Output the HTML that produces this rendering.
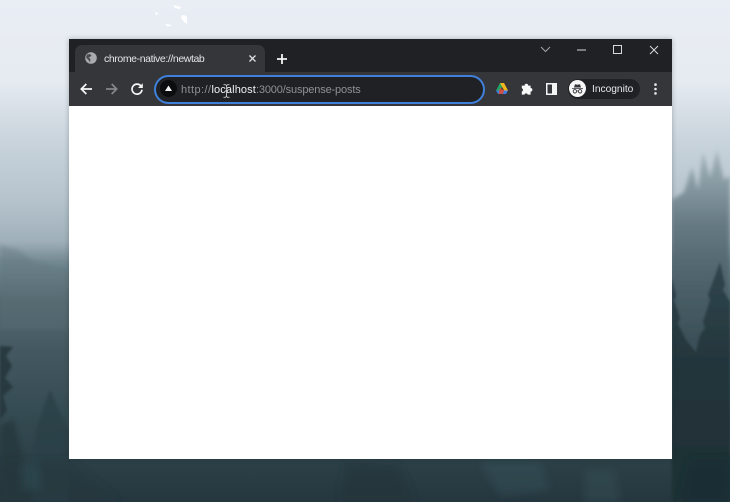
<!DOCTYPE html>
<html lang="en">
<head>
<meta charset="utf-8">
<title>Chrome incognito window</title>
<style>
html,body{margin:0;padding:0;width:730px;height:502px;overflow:hidden;background:#e9edf4}
body{position:relative;font-family:"Liberation Sans",sans-serif}
#bg{position:absolute;left:0;top:0}
#win{position:absolute;left:69px;top:39px;width:603px;height:420px;background:#202124;box-shadow:0 0 5px rgba(30,40,50,.3)}
#tab{position:absolute;left:6px;top:6px;width:190px;height:27px;background:#35363a;border-radius:7px 7px 0 0}
#tabt{position:absolute;left:35px;top:13px;font-size:10.5px;letter-spacing:-.4px;line-height:14px;color:#e4e5e7;white-space:nowrap}
#bar{position:absolute;left:0;top:33px;width:603px;height:34px;background:#35363a}
#page{position:absolute;left:0;top:67px;width:603px;height:353px;background:#fff}
#omni{position:absolute;left:85px;top:36px;width:327px;height:25px;border:2px solid #3f80da;border-radius:15px;background:#202124}
#url{position:absolute;left:112px;top:44px;font-size:11px;line-height:14px;color:#8f9194;white-space:nowrap}
#url i{font-style:normal;letter-spacing:.42px}
#url b{font-weight:normal;color:#f1f2f3;letter-spacing:.12px}
#url span{letter-spacing:-.15px}
#pill{position:absolute;left:499px;top:40px;width:72px;height:20px;border-radius:10px;background:#202124}
#inc{position:absolute;left:523px;top:44px;font-size:10.2px;line-height:14px;color:#e8e9ea;white-space:nowrap}
svg.i{position:absolute;overflow:visible}
</style>
</head>
<body>
<svg id="bg" width="730" height="502" viewBox="0 0 730 502">
<defs>
<linearGradient id="sky" x1="0" y1="0" x2="0" y2="502" gradientUnits="userSpaceOnUse">
<stop offset="0" stop-color="#e9edf4"/>
<stop offset=".16" stop-color="#e6ebf1"/>
<stop offset=".28" stop-color="#c9d4dc"/>
<stop offset=".4" stop-color="#b5c3cc"/>
<stop offset=".48" stop-color="#a0b0ba"/>
<stop offset=".52" stop-color="#748a93"/>
<stop offset=".6" stop-color="#54696f"/>
<stop offset=".7" stop-color="#435860"/>
<stop offset=".84" stop-color="#334950"/>
<stop offset="1" stop-color="#25373e"/>
</linearGradient>
<linearGradient id="fade" x1="0" y1="150" x2="0" y2="340" gradientUnits="userSpaceOnUse">
<stop offset="0" stop-color="#7e939b" stop-opacity=".5"/>
<stop offset=".4" stop-color="#5d727a" stop-opacity=".9"/>
<stop offset="1" stop-color="#3b5058"/>
</linearGradient>
<linearGradient id="near" x1="0" y1="262" x2="0" y2="460" gradientUnits="userSpaceOnUse">
<stop offset="0" stop-color="#31464e"/>
<stop offset=".5" stop-color="#24363c"/>
<stop offset="1" stop-color="#1f3036"/>
</linearGradient>
<filter id="b3" x="-20%" y="-20%" width="140%" height="140%"><feGaussianBlur stdDeviation="2"/></filter>
<filter id="b1" x="-20%" y="-20%" width="140%" height="140%"><feGaussianBlur stdDeviation="1"/></filter>
<filter id="b5" x="-20%" y="-20%" width="140%" height="140%"><feGaussianBlur stdDeviation="4"/></filter>
</defs>
<rect width="730" height="502" fill="url(#sky)"/>
<!-- right distant conifers -->
<path filter="url(#b3)" d="M672 200L684 192L692 167L698 190L703 152L710 178L717 150L724 180L730 176V360H672Z" fill="url(#fade)"/>
<!-- right near conifers -->
<path filter="url(#b1)" d="M672 278L676 296L674 300L680 318L678 324L686 340L696 352L700 335L705 328L703 322L710 300L708 295L720 262L725 285L723 290L730 302V502H672Z" fill="url(#near)"/>
<!-- left haze -->
<path filter="url(#b3)" d="M0 245L18 250L35 262L69 268V330H0Z" fill="#5b7179" opacity=".35"/>
<!-- left branches and trees -->
<path filter="url(#b1)" d="M0 346L13 347L6 356L12 366L5 378L13 387L3 396L7 410L0 420Z" fill="#25373d" opacity=".9"/>
<path filter="url(#b1)" d="M50 390L58 408L66 425L69 430V502H30L36 430L42 412Z" fill="#2c4047" opacity=".75"/>
<path filter="url(#b3)" d="M0 425L14 420L24 462L30 502H0Z" fill="#26383e" opacity=".8"/>
<!-- bottom texture -->
<g filter="url(#b5)">
<path d="M0 462L70 460L120 502H0Z" fill="#20333a" opacity=".45"/>
<path d="M20 465L38 462L42 490L22 490Z" fill="#3a5860" opacity=".35"/>
<path d="M345 462L400 465L415 502H340Z" fill="#1e3036" opacity=".5"/>
<path d="M480 462L540 462L550 490L500 495Z" fill="#3a565d" opacity=".4"/>
<path d="M585 470L615 470L620 502H585Z" fill="#395359" opacity=".4"/>
<path d="M690 460L730 460V502H680Z" fill="#1c2d33" opacity=".8"/>
</g>
<path d="M173 5L181 7L180 9L175 8ZM156 12L158 13L157 15L155 14ZM182 15L187 16L187 24L184 22L181 18ZM166 24L172 25L170 26L166 26Z" fill="#fff"/>
</svg>

<div id="win">
<div id="tab"></div>
<div id="bar"></div>
<div id="page"></div>
<div id="omni"></div>
<div id="tabt">chrome-native://newtab</div>
<div id="url"><i>http://</i><b>localhost</b><span>:3000/suspense-posts</span></div>
<div id="pill"></div>
<div id="inc">Incognito</div>
</div>

<!-- favicon globe -->
<svg class="i" style="left:85px;top:52px" width="12" height="12" viewBox="0 0 12 12"><circle cx="6" cy="6" r="5.8" fill="#a9abae"/><path d="M2 2.5L5 2L6.5 3.5L5 5L3.5 5.5L5.5 7L5 10.5L3.5 8L1 5.5Z" fill="#4a4b4f"/></svg>
<!-- tab close -->
<svg class="i" style="left:248px;top:54px" width="9" height="9" viewBox="0 0 9 9"><path d="M1.5 1.5L7.5 7.5M7.5 1.5L1.5 7.5" stroke="#e4e5e7" stroke-width="1.3" fill="none"/></svg>
<!-- new tab -->
<svg class="i" style="left:276px;top:53px" width="12" height="12" viewBox="0 0 12 12"><path d="M6 1V11M1 6H11" stroke="#f4f4f5" stroke-width="1.8" fill="none"/></svg>
<!-- window controls -->
<svg class="i" style="left:540px;top:46px" width="11" height="8" viewBox="0 0 11 8"><path d="M1 1L5.5 5.5L10 1" stroke="#a3a4a7" stroke-width="1" fill="none"/></svg>
<svg class="i" style="left:577px;top:49px" width="9" height="2" viewBox="0 0 9 2"><path d="M0 1H9" stroke="#d8d9da" stroke-width="1" fill="none"/></svg>
<svg class="i" style="left:613px;top:45px" width="9" height="9" viewBox="0 0 9 9"><rect x=".5" y=".5" width="8" height="8" stroke="#d8d9da" stroke-width="1" fill="none"/></svg>
<svg class="i" style="left:649px;top:45px" width="10" height="10" viewBox="0 0 10 10"><path d="M1 1L9 9M9 1L1 9" stroke="#d8d9da" stroke-width="1" fill="none"/></svg>
<!-- back -->
<svg class="i" style="left:80px;top:83px" width="12" height="12" viewBox="0 0 12 12"><path d="M12 6H1.5M6.3 1L1.3 6L6.3 11" stroke="#f6f6f7" stroke-width="1.7" fill="none"/></svg>
<!-- forward -->
<svg class="i" style="left:106px;top:83px" width="12" height="12" viewBox="0 0 12 12"><path d="M0 6H10.5M5.7 1L10.7 6L5.7 11" stroke="#85878a" stroke-width="1.7" fill="none"/></svg>
<!-- reload -->
<svg class="i" style="left:131px;top:83px" width="12" height="12" viewBox="0 0 12 12"><path d="M10.1 3.2A5 5 0 1 0 11 6.8" stroke="#f6f6f7" stroke-width="1.7" fill="none"/><path d="M11.8 .2V5H7Z" fill="#f6f6f7"/></svg>
<!-- site info -->
<svg class="i" style="left:160px;top:80px" width="17" height="17" viewBox="0 0 17 17"><circle cx="8.5" cy="8.5" r="8.5" fill="#0c0d0e"/><path d="M8.5 5.5L12 11H5Z" fill="#f4f4f5"/></svg>
<!-- text cursor -->
<svg class="i" style="left:223px;top:84px" width="7" height="14" viewBox="0 0 7 14"><path d="M.5 .7H2.5L3.5 1.7L4.5 .7H6.5M3.5 1.7V12.3M.5 13.3H2.5L3.5 12.3L4.5 13.3H6.5M2 7H5" stroke="#c9cacc" stroke-width=".9" fill="none"/></svg>
<!-- drive -->
<svg class="i" style="left:496px;top:83px" width="12" height="11" viewBox="0 0 12 11"><path d="M4 0H8L5.5 5L3.8 7.8H0L2 3.8Z" fill="#1fa463"/><path d="M4 0H8L12 7.5H8.1Z" fill="#f2b61c"/><path d="M0 7.5H12L10 11H2Z" fill="#3f7ee8"/><path d="M4 4.8L8 7.5L7 11H2.6Z" fill="#dd4b39" opacity=".9"/></svg>
<!-- puzzle -->
<svg class="i" style="left:521px;top:83px" width="12" height="12" viewBox="0 0 12 12"><path d="M.8 2.6H3.6A1.8 1.8 0 0 1 7.2 2.6H9.6V5A1.8 1.8 0 0 1 9.6 8.6V11.6H6.8A1.8 1.8 0 0 0 3.4 11.6H.8V8.6A1.8 1.8 0 0 0 .8 5.2Z" fill="#f8f8f9"/></svg>
<!-- side panel -->
<svg class="i" style="left:546px;top:83px" width="11" height="12" viewBox="0 0 11 12"><rect x=".75" y=".75" width="9.5" height="10.5" stroke="#f4f4f5" stroke-width="1.5" fill="none"/><rect x="6" y="1" width="4" height="10" fill="#f4f4f5"/></svg>
<!-- incognito avatar -->
<svg class="i" style="left:569px;top:80px" width="17" height="17" viewBox="0 0 17 17"><circle cx="8.5" cy="8.5" r="8.5" fill="#f7f7f8"/><path d="M3 8H14V8.8H3ZM5 7.5L6 4.2L8.5 4.8L11 4.2L12 7.5Z" fill="#35363a"/><circle cx="5.9" cy="11.3" r="1.7" stroke="#35363a" stroke-width=".9" fill="none"/><circle cx="11.1" cy="11.3" r="1.7" stroke="#35363a" stroke-width=".9" fill="none"/><path d="M7.6 11H9.4" stroke="#35363a" stroke-width=".8"/></svg>
<!-- menu -->
<svg class="i" style="left:653px;top:83px" width="5" height="12" viewBox="0 0 5 12"><circle cx="2.5" cy="1.6" r="1.3" fill="#eceded"/><circle cx="2.5" cy="6" r="1.3" fill="#eceded"/><circle cx="2.5" cy="10.4" r="1.3" fill="#eceded"/></svg>
</body>
</html>
